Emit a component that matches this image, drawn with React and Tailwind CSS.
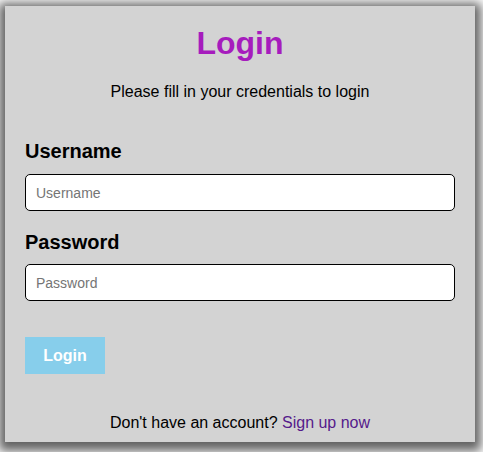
export default function App() {
  return (
    <div className="w-[483px] h-[452px] bg-white overflow-hidden font-['Liberation_Sans',Arial,sans-serif]">
      <div className="ml-[5px] mt-[6px] w-[470px] h-[436px] bg-[#d3d3d3] shadow-[0_3px_10px_6px_rgba(0,0,0,0.62)] px-5 pt-[19px] flex flex-col">
        <h1 className="text-center text-[32px] leading-[37px] font-bold text-[#a61cbd]">Login</h1>
        <p className="mt-[21px] text-center text-[16px] leading-[18px] text-black">
          Please fill in your credentials to login
        </p>
        <label className="mt-[39px] text-[20px] leading-[23px] font-bold text-black">Username</label>
        <input
          type="text"
          placeholder="Username"
          className="mt-[11px] h-[37px] w-full rounded-[5px] border border-black bg-white px-[10px] text-[14px] placeholder:text-[#757575] outline-none"
        />
        <label className="mt-[20px] text-[20px] leading-[23px] font-bold text-black">Password</label>
        <input
          type="password"
          placeholder="Password"
          className="mt-[10px] h-[37px] w-full rounded-[5px] border border-black bg-white px-[10px] text-[14px] placeholder:text-[#757575] outline-none"
        />
        <button className="mt-[36px] h-[37px] w-[80px] bg-[#87ceeb] text-white text-[16px] font-bold">
          Login
        </button>
        <p className="mt-[40px] text-center text-[16px] leading-[18px] text-black">
          Don't have an account? <a href="#" className="text-[#551a8b]">Sign up now</a>
        </p>
      </div>
    </div>
  );
}
